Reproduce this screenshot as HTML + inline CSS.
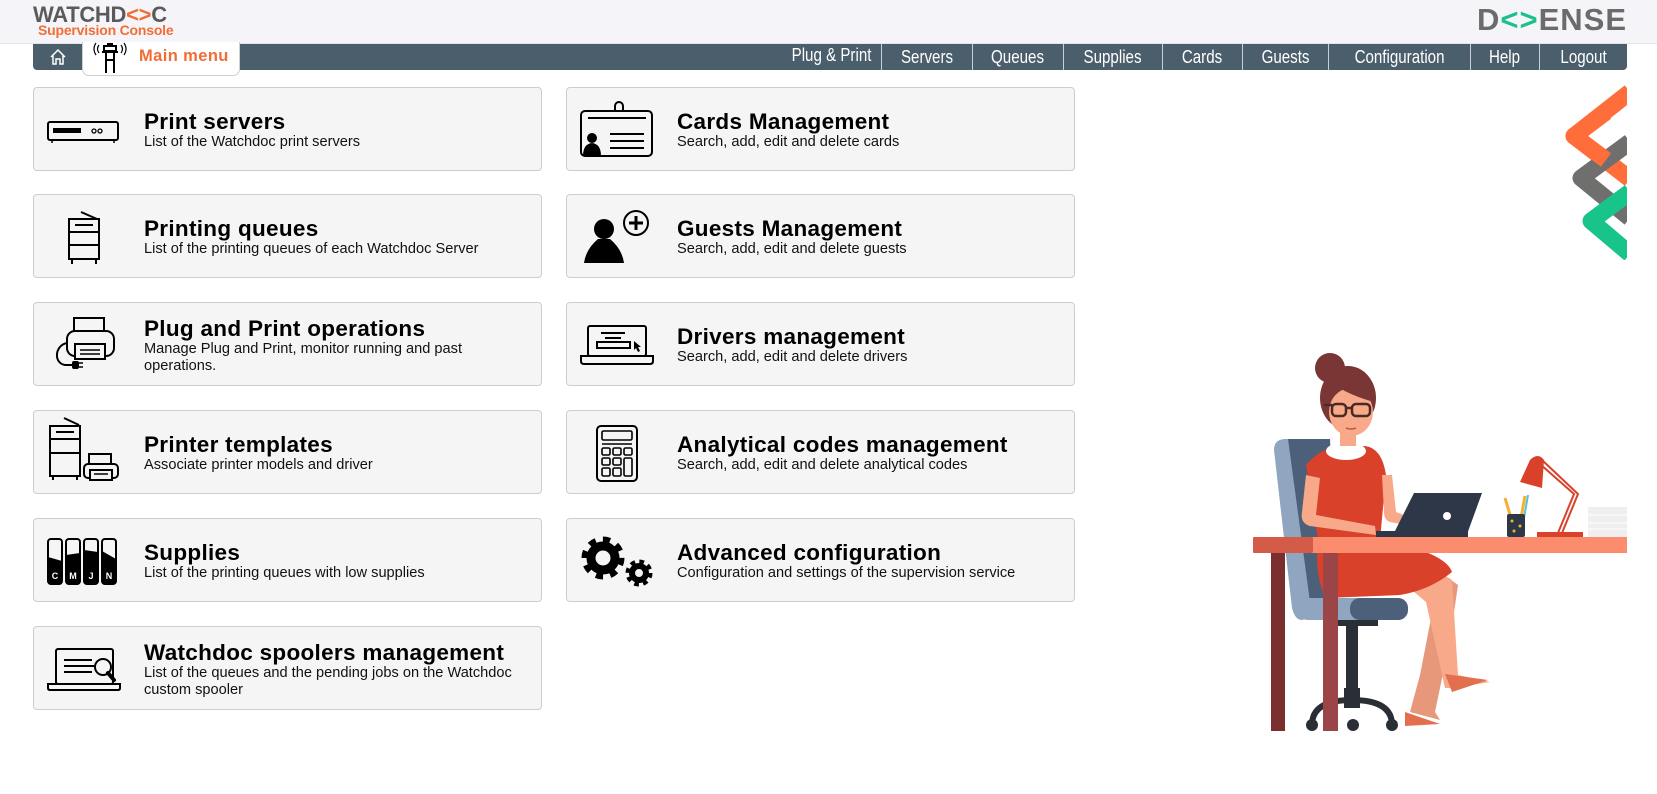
<!DOCTYPE html>
<html><head><meta charset="utf-8">
<style>
*{margin:0;padding:0;box-sizing:border-box}
body{width:1657px;height:794px;background:#fff;position:relative;overflow:hidden;font-family:"Liberation Sans",sans-serif;color:#000}
.top{position:absolute;left:0;top:0;width:1657px;height:44px;background:#f5f5f9;border-bottom:1px solid #e4e4ea}
.nav{position:absolute;left:33px;top:44px;width:1594px;height:26px;background:#4a5e6b;border-radius:0 0 4px 4px}
.ni{position:absolute;top:44px;height:26px;color:#fff;font-size:18px;line-height:26px;text-align:center;border-left:1px solid #c9d0d5;white-space:nowrap}
.ni span{display:inline-block;transform:scaleX(0.84)}
.tab{position:absolute;left:82px;top:42px;width:158px;height:34px;background:#fff;border:1px solid #cfcfcf;border-top:none;border-radius:0 0 7px 7px}
.tab span{position:absolute;left:56px;top:5px;color:#f26d35;font-weight:bold;font-size:16.5px;letter-spacing:.4px}
.card{position:absolute;width:509px;height:84px;background:#f5f5f5;border:1px solid #cdcdcd;border-radius:4px}
.card svg{position:absolute;left:13px;top:12px;overflow:visible}
.card .t{position:absolute;left:110px;right:20px;top:0;bottom:0;display:flex;flex-direction:column;justify-content:center;padding-top:2px}
.card h2{font-size:22.5px;font-weight:bold;line-height:25px;letter-spacing:.3px}
.card p{font-size:14.6px;line-height:17px;color:#111}
</style></head><body>
<div class="top"></div>
<div style="position:absolute;left:33px;top:3px;font-weight:bold;font-size:22px;color:#5a5a5a;letter-spacing:-0.3px;line-height:24px">WATCHD<span style="color:#f26d35">&lt;&gt;</span>C</div>
<div style="position:absolute;left:38px;top:24px;font-size:14px;font-weight:bold;color:#f26d35;line-height:13px;letter-spacing:-0.2px">Supervision Console</div>
<div style="position:absolute;left:1430px;top:5px;width:197px;text-align:right;font-size:31px;font-weight:bold;color:#6b6b6b;line-height:30px;letter-spacing:1px">D<span style="color:#1cc08a">&lt;&gt;</span>ENSE</div>
<div class="nav"></div>
<svg style="position:absolute;left:48px;top:47px" width="20" height="20" viewBox="0 0 20 20"><path d="M3 10 L10 3 L17 10 M5 8 V17 H8 V12 H12 V17 H15 V8" fill="none" stroke="#fff" stroke-width="1.5"/></svg>
<div class="tab"><svg style="position:absolute;left:10px;top:0" width="34" height="32" viewBox="0 0 34 32"><path d="M11 4 H23 V9 H11Z M9 10 H25 M13 10 V31 M21 10 V31 M13 18 H21 M14 2 H20" fill="none" stroke="#000" stroke-width="2"/><path d="M6 3 Q3 7 6 11 M28 3 Q31 7 28 11 M3 1 Q-1 7 3 13 M31 1 Q35 7 31 13" fill="none" stroke="#000" stroke-width="1.2"/></svg><span>Main menu</span></div>
<div class="ni" style="left:782px;width:99px;border-left:none;line-height:22px"><span>Plug &amp; Print</span></div>
<div class="ni" style="left:881px;width:91px"><span>Servers</span></div>
<div class="ni" style="left:972px;width:91px"><span>Queues</span></div>
<div class="ni" style="left:1063px;width:99px"><span>Supplies</span></div>
<div class="ni" style="left:1162px;width:80px"><span>Cards</span></div>
<div class="ni" style="left:1242px;width:86px"><span>Guests</span></div>
<div class="ni" style="left:1328px;width:142px"><span>Configuration</span></div>
<div class="ni" style="left:1470px;width:69px"><span>Help</span></div>
<div class="ni" style="left:1539px;width:88px"><span>Logout</span></div>

<div class="card" style="left:33px;top:87px"><svg width="72" height="60"><rect x="1" y="22" width="70" height="18" rx="2" fill="none" stroke="#000" stroke-width="2"/><rect x="6" y="28" width="28" height="5" fill="#000"/><circle cx="47" cy="31" r="2" fill="none" stroke="#000" stroke-width="1.3"/><circle cx="53" cy="31" r="2" fill="none" stroke="#000" stroke-width="1.3"/><path d="M5 40 V43 M67 40 V43" stroke="#000" stroke-width="1.5"/></svg><div class="t"><h2>Print servers</h2><p>List of the Watchdoc print servers</p></div></div>
<div class="card" style="left:33px;top:194px"><svg width="72" height="60"><rect x="22" y="12" width="30" height="40" fill="none" stroke="#000" stroke-width="2"/><path d="M22 25 H52 M22 38 H52 M28 18 H46 M34 5 L50 12 M25 52 V57 M49 52 V57" stroke="#000" stroke-width="2" fill="none"/></svg><div class="t"><h2>Printing queues</h2><p>List of the printing queues of each Watchdoc Server</p></div></div>
<div class="card" style="left:33px;top:302px"><svg width="72" height="60"><rect x="27" y="3" width="30" height="13" fill="none" stroke="#000" stroke-width="2"/><rect x="20" y="16" width="47" height="25" rx="8" fill="#f5f5f5" stroke="#000" stroke-width="2"/><rect x="28" y="29" width="30" height="15" fill="#f5f5f5" stroke="#000" stroke-width="2"/><path d="M33 35 H53 M33 39 H53" stroke="#000" stroke-width="1.5"/><path d="M20 28 C8 30 6 48 18 50 L26 50" fill="none" stroke="#000" stroke-width="2"/><rect x="25" y="46" width="7" height="8" rx="2" fill="#000"/><path d="M32 48 H36 M32 52 H36" stroke="#000" stroke-width="1.5"/></svg><div class="t"><h2>Plug and Print operations</h2><p>Manage Plug and Print, monitor running and past<br>operations.</p></div></div>
<div class="card" style="left:33px;top:410px"><svg width="72" height="60"><rect x="3" y="3" width="30" height="50" fill="none" stroke="#000" stroke-width="2"/><path d="M3 16 H33 M3 30 H33 M9 9 H27 M17 -5 L32 2 M6 53 V57 M30 53 V57" stroke="#000" stroke-width="2" fill="none"/><rect x="42" y="31" width="22" height="10" fill="none" stroke="#000" stroke-width="2"/><rect x="37" y="41" width="34" height="14" rx="4" fill="#f5f5f5" stroke="#000" stroke-width="2"/><rect x="43" y="47" width="22" height="10" fill="#f5f5f5" stroke="#000" stroke-width="2"/><path d="M47 51 H61" stroke="#000" stroke-width="1.5"/></svg><div class="t"><h2>Printer templates</h2><p>Associate printer models and driver</p></div></div>
<div class="card" style="left:33px;top:518px"><svg width="74" height="60"><g stroke="#000" stroke-width="2"><rect x="1" y="8" width="14" height="45" rx="3" fill="none"/><rect x="19" y="8" width="14" height="45" rx="3" fill="none"/><rect x="37" y="8" width="14" height="45" rx="3" fill="none"/><rect x="55" y="8" width="14" height="45" rx="3" fill="none"/></g><path d="M1 26 L15 30 V50 Q15 53 12 53 H4 Q1 53 1 50Z M19 24 L33 22 V50 Q33 53 30 53 H22 Q19 53 19 50Z M37 19 L51 21 V50 Q51 53 48 53 H40 Q37 53 37 50Z M55 20 L69 28 V50 Q69 53 66 53 H58 Q55 53 55 50Z" fill="#000"/><g fill="#fff" font-size="9" font-weight="bold" font-family="Liberation Sans" text-anchor="middle"><text x="8" y="48">C</text><text x="26" y="48">M</text><text x="44" y="48">J</text><text x="62" y="48">N</text></g></svg><div class="t"><h2>Supplies</h2><p>List of the printing queues with low supplies</p></div></div>
<div class="card" style="left:33px;top:626px"><svg width="74" height="60"><rect x="9" y="10" width="57" height="35" rx="2" fill="none" stroke="#000" stroke-width="2"/><path d="M1 45 H73 V49 Q73 51 71 51 H3 Q1 51 1 49Z" fill="none" stroke="#000" stroke-width="2"/><path d="M17 21 H45 M17 27 H48 M17 33 H45" stroke="#000" stroke-width="2"/><circle cx="56" cy="28" r="8" fill="#f5f5f5" stroke="#000" stroke-width="2"/><path d="M61 34 L67 41" stroke="#000" stroke-width="4" stroke-linecap="round"/></svg><div class="t"><h2>Watchdoc spoolers management</h2><p>List of the queues and the pending jobs on the Watchdoc<br>custom spooler</p></div></div>

<div class="card" style="left:566px;top:87px"><svg width="74" height="60"><rect x="1" y="11" width="71" height="45" rx="4" fill="none" stroke="#000" stroke-width="2"/><path d="M35 11 V6 A4 4 0 0 1 43 6 V11" fill="none" stroke="#000" stroke-width="2"/><path d="M8 18 H66 M30 34 H64 M30 41 H64 M30 48 H64" stroke="#000" stroke-width="2"/><circle cx="12" cy="38" r="5" fill="#000"/><path d="M3 56 Q3 44 12 43 Q21 44 21 56Z" fill="#000"/></svg><div class="t"><h2>Cards Management</h2><p>Search, add, edit and delete cards</p></div></div>
<div class="card" style="left:566px;top:194px"><svg width="74" height="60"><circle cx="24" cy="22" r="10" fill="#000"/><path d="M4 56 Q6 42 18 32 H30 Q42 42 44 56Z" fill="#000"/><circle cx="56" cy="16" r="12" fill="none" stroke="#000" stroke-width="2"/><path d="M56 9 V23 M49 16 H63" stroke="#000" stroke-width="3"/></svg><div class="t"><h2>Guests Management</h2><p>Search, add, edit and delete guests</p></div></div>
<div class="card" style="left:566px;top:302px"><svg width="74" height="60"><rect x="8" y="11" width="58" height="30" rx="2" fill="none" stroke="#000" stroke-width="2"/><path d="M1 41 H73 V46 Q73 49 70 49 H4 Q1 49 1 46Z" fill="none" stroke="#000" stroke-width="2"/><path d="M21 18 H45 M25 23 H41" stroke="#000" stroke-width="2"/><rect x="17" y="27" width="33" height="6" fill="none" stroke="#000" stroke-width="2"/><path d="M54 26 L54 35 L56 33 L58 37 L60 36 L58 32 L61 32Z" fill="#000"/></svg><div class="t"><h2>Drivers management</h2><p>Search, add, edit and delete drivers</p></div></div>
<div class="card" style="left:566px;top:410px"><svg width="74" height="60"><rect x="17" y="3" width="40" height="55" rx="4" fill="none" stroke="#000" stroke-width="2"/><rect x="22" y="8" width="30" height="9" rx="1.5" fill="none" stroke="#000" stroke-width="1.6"/><path d="M22 21 H52" stroke="#000" stroke-width="1.5"/><g fill="none" stroke="#000" stroke-width="1.6"><rect x="22" y="25" width="8" height="7" rx="1.5"/><rect x="33" y="25" width="8" height="7" rx="1.5"/><rect x="44" y="25" width="8" height="7" rx="1.5"/><rect x="22" y="35" width="8" height="7" rx="1.5"/><rect x="33" y="35" width="8" height="7" rx="1.5"/><rect x="44" y="35" width="8" height="18" rx="1.5"/><rect x="22" y="45" width="8" height="8" rx="1.5"/><rect x="33" y="45" width="8" height="8" rx="1.5"/></g></svg><div class="t"><h2>Analytical codes management</h2><p>Search, add, edit and delete analytical codes</p></div></div>
<div class="card" style="left:566px;top:518px"><svg width="74" height="60"><circle cx="23" cy="27" r="18" fill="none" stroke="#000" stroke-width="7" stroke-dasharray="7 7.1"/><circle cx="23" cy="27" r="12" fill="none" stroke="#000" stroke-width="9"/><circle cx="59" cy="42" r="11" fill="none" stroke="#000" stroke-width="5" stroke-dasharray="4.5 4.14"/><circle cx="59" cy="42" r="7" fill="none" stroke="#000" stroke-width="6"/></svg><div class="t"><h2>Advanced configuration</h2><p>Configuration and settings of the supervision service</p></div></div>

<svg style="position:absolute;left:1560px;top:84px" width="67" height="176" viewBox="0 0 67 176"><g fill="none" stroke-width="17" stroke-linejoin="round"><path d="M70 8 L14 52 L70 95" stroke="#ff6e3a"/><path d="M70 58 L21 94 L70 134" stroke="#6f6f6e"/><path d="M70 108 L31 137 L70 170" stroke="#19c48b"/><path d="M46 28 L14 52 L46 76" stroke="#ff6e3a"/></g></svg>

<svg style="position:absolute;left:1240px;top:340px" width="400" height="400" viewBox="0 0 400 400">
<path d="M34 110 Q34 99 46 99 L82 99 L94 270 L62 280 Q55 280 52 268Z" fill="#8fa5c0"/>
<path d="M48 99 L90 99 L98 262 L70 262Z" fill="#4d6079"/>
<rect x="58" y="258" width="110" height="22" rx="10" fill="#8fa5c0"/>
<rect x="110" y="258" width="58" height="22" rx="10" fill="#4d6079"/>
<rect x="106" y="280" width="12" height="75" fill="#2a2f36"/>
<rect x="98" y="280" width="40" height="6" fill="#2a2f36"/>
<path d="M72 385 Q72 360 112 360 Q152 360 152 385" fill="none" stroke="#2a2f36" stroke-width="6"/>
<rect x="104" y="348" width="16" height="20" fill="#2a2f36"/>
<circle cx="72" cy="385" r="6" fill="#2a2f36"/><circle cx="113" cy="385" r="6" fill="#2a2f36"/><circle cx="152" cy="385" r="6" fill="#2a2f36"/>
<path d="M200 232 L180 335 L170 372 L200 380 L195 372 L210 300 L218 245Z" fill="#e8987a"/>
<path d="M165 372 L200 384 L165 386Z" fill="#e2704f"/>
<path d="M160 240 Q200 230 212 240 L218 335 L250 342 L214 348 L205 348 L186 262Z" fill="#f7a98a"/>
<path d="M205 334 L248 340 L212 352Z" fill="#e2704f"/>
<path d="M66 125 Q80 108 100 106 L125 106 Q142 108 146 135 L140 200 Q205 212 212 232 Q190 250 160 255 L85 258 Q74 230 78 200 Z" fill="#d9412b"/>
<path d="M66 135 L80 138 L76 175 L135 186 L136 195 L70 186 Q60 183 62 172Z" fill="#f7a98a"/>
<path d="M142 135 L152 135 L156 172 L172 178 L172 186 L150 182 Q144 180 144 172Z" fill="#f7a98a"/>
<ellipse cx="106" cy="111" rx="20" ry="9" fill="#fff"/>
<rect x="100" y="88" width="16" height="18" fill="#f7a98a"/>
<circle cx="90" cy="28" r="15" fill="#7a3535"/>
<ellipse cx="108" cy="58" rx="28" ry="32" fill="#7a3535"/>
<ellipse cx="111" cy="72" rx="22" ry="24" fill="#f7a98a"/>
<path d="M82 60 Q86 34 112 34 Q134 36 134 62 Q112 56 96 46 Q90 58 82 60Z" fill="#7a3535"/>
<g fill="none" stroke="#4a2a25" stroke-width="2.5"><rect x="92" y="64" width="14" height="12" rx="4"/><rect x="112" y="64" width="18" height="12" rx="4"/><path d="M106 68 H112 M84 65 H92"/></g>
<path d="M106 88 Q111 90 116 88" stroke="#c0573f" stroke-width="1.5" fill="none"/>
<path d="M174 153 L242 153 L226 197 L152 197Z" fill="#2d3748"/>
<rect x="136" y="191" width="92" height="6" fill="#2d3748"/>
<circle cx="207" cy="176" r="4" fill="#fff"/>
<rect x="13" y="197" width="374" height="16" fill="#fb8c6e"/>
<rect x="13" y="197" width="60" height="16" rx="2" fill="#d35b48"/>
<rect x="31" y="213" width="14" height="178" fill="#7a2f2f"/>
<rect x="83" y="213" width="15" height="178" fill="#9c4548"/>
<rect x="348" y="167" width="39" height="30" fill="#efefef"/>
<path d="M348 175 H387 M348 183 H387 M346 189 H387" stroke="#fff" stroke-width="1"/>
<path d="M265 158 L271 178 M285 156 L281 178" stroke="#f5b032" stroke-width="3"/>
<path d="M288 155 L284 178" stroke="#4fc3e0" stroke-width="2"/>
<rect x="267" y="174" width="18" height="23" rx="2" fill="#2d3748"/>
<g fill="#f5b032"><circle cx="272" cy="181" r="1.5"/><circle cx="280" cy="186" r="1.5"/><circle cx="274" cy="191" r="1.5"/></g>
<rect x="297" y="192" width="46" height="5" fill="#d9412b"/>
<path d="M322 193 L338 154 L302 120 M318 193 L334 154 L300 124" fill="none" stroke="#d9412b" stroke-width="2"/>
<path d="M280 142 L290 120 Q298 112 304 120 L302 148Z" fill="#d9412b"/>
</svg>
</body></html>
